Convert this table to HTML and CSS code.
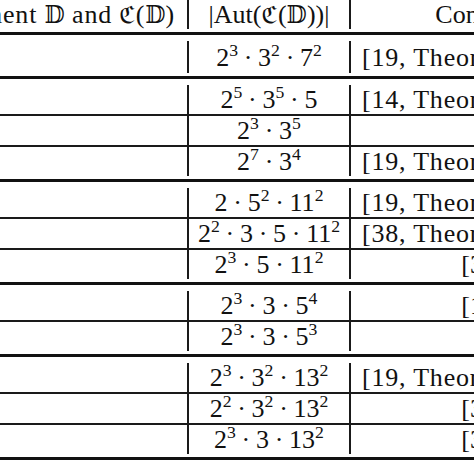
FILE: index.html
```html
<!DOCTYPE html>
<html>
<head>
<meta charset="utf-8">
<link rel="stylesheet" href="styles.css">
</head>
<body>
<div class="viewport">
  <div class="tbl">
    <div class="row head">
      <div class="c c1"><span class="t wide">Element <span class="bb">𝔻</span> and <span class="fk">ℭ</span>(<span class="bb">𝔻</span>)</span></div>
      <div class="c c2"><span class="t">|Aut(<span class="fk">ℭ</span>(<span class="bb">𝔻</span>))|</span></div>
      <div class="c c3"><span class="t">Construction</span></div>
    </div>
    <div class="dbl"></div>

    <div class="group g1">
      <div class="row">
        <div class="c c1"></div>
        <div class="c c2"><span class="t">2<sup>3</sup><span class="op">·</span>3<sup>2</sup><span class="op">·</span>7<sup>2</sup></span></div>
        <div class="c c3 l"><span class="t wide">[19, Theorem 3.14, Case 2]</span></div>
      </div>
    </div>
    <div class="dbl"></div>

    <div class="group">
      <div class="row">
        <div class="c c1"></div>
        <div class="c c2"><span class="t">2<sup>5</sup><span class="op">·</span>3<sup>5</sup><span class="op">·</span>5</span></div>
        <div class="c c3 l"><span class="t wide">[14, Theorem 4.12, Case 1]</span></div>
      </div>
      <div class="row">
        <div class="c c1"></div>
        <div class="c c2"><span class="t">2<sup>3</sup><span class="op">·</span>3<sup>5</sup></span></div>
        <div class="c c3"></div>
      </div>
      <div class="row">
        <div class="c c1"></div>
        <div class="c c2"><span class="t">2<sup>7</sup><span class="op">·</span>3<sup>4</sup></span></div>
        <div class="c c3 l"><span class="t wide">[19, Theorem 3.15, Case 3]</span></div>
      </div>
    </div>
    <div class="dbl"></div>

    <div class="group">
      <div class="row">
        <div class="c c1"></div>
        <div class="c c2"><span class="t">2<span class="op">·</span>5<sup>2</sup><span class="op">·</span>11<sup>2</sup></span></div>
        <div class="c c3 l"><span class="t wide">[19, Theorem 3.16, Case 1]</span></div>
      </div>
      <div class="row">
        <div class="c c1"></div>
        <div class="c c2"><span class="t">2<sup>2</sup><span class="op">·</span>3<span class="op">·</span>5<span class="op">·</span>11<sup>2</sup></span></div>
        <div class="c c3 l"><span class="t wide">[38, Theorem 5.11, Case 2]</span></div>
      </div>
      <div class="row">
        <div class="c c1"></div>
        <div class="c c2"><span class="t">2<sup>3</sup><span class="op">·</span>5<span class="op">·</span>11<sup>2</sup></span></div>
        <div class="c c3"><span class="t">[35, 36]</span></div>
      </div>
    </div>
    <div class="dbl"></div>

    <div class="group">
      <div class="row">
        <div class="c c1"></div>
        <div class="c c2"><span class="t">2<sup>3</sup><span class="op">·</span>3<span class="op">·</span>5<sup>4</sup></span></div>
        <div class="c c3"><span class="t">[16, 17]</span></div>
      </div>
      <div class="row">
        <div class="c c1"></div>
        <div class="c c2"><span class="t">2<sup>3</sup><span class="op">·</span>3<span class="op">·</span>5<sup>3</sup></span></div>
        <div class="c c3"></div>
      </div>
    </div>
    <div class="dbl"></div>

    <div class="group">
      <div class="row">
        <div class="c c1"></div>
        <div class="c c2"><span class="t">2<sup>3</sup><span class="op">·</span>3<sup>2</sup><span class="op">·</span>13<sup>2</sup></span></div>
        <div class="c c3 l"><span class="t wide">[19, Theorem 3.17, Case 1]</span></div>
      </div>
      <div class="row">
        <div class="c c1"></div>
        <div class="c c2"><span class="t">2<sup>2</sup><span class="op">·</span>3<sup>2</sup><span class="op">·</span>13<sup>2</sup></span></div>
        <div class="c c3"><span class="t">[35, 36]</span></div>
      </div>
      <div class="row">
        <div class="c c1"></div>
        <div class="c c2"><span class="t">2<sup>3</sup><span class="op">·</span>3<span class="op">·</span>13<sup>2</sup></span></div>
        <div class="c c3"><span class="t">[36, 37]</span></div>
      </div>
    </div>
    <div class="dbl"></div>
  </div>
</div>
</body>
</html>
```
FILE: styles.css
```css
html, body {
  margin: 0;
  padding: 0;
  background: #fff;
}

.viewport {
  width: 474px;
  height: 474px;
  overflow: hidden;
}

.tbl {
  width: 761px;
  margin-left: -113px;
  font-family: "Liberation Serif", "Times New Roman", Tinos, "DejaVu Serif", serif;
  font-size: 26px;
  color: #111;
}

.row {
  display: grid;
  grid-template-columns: 300px 162px 299px;
}

.c {
  box-sizing: border-box;
  display: flex;
  align-items: center;
  justify-content: center;
  white-space: nowrap;
  height: 29px;
}

.c3 {
  padding-left: 6px;
}

.c3.l {
  justify-content: flex-start;
  padding-left: 11px;
}

.t {
  display: block;
  line-height: 29px;
  white-space: nowrap;
}

.wide {
  letter-spacing: 0.8px;
}

.c2, .c3 {
  border-left: 2px solid #1a1a1a;
}

.head {
  padding-bottom: 3px;
}

.head .c1 {
  justify-content: flex-end;
  padding-right: 12px;
}

.bb, .fk {
  font-family: "DejaVu Serif", "DejaVu Sans", serif;
  font-size: 0.9em;
  letter-spacing: 0;
}

.dbl {
  height: 3px;
  background: #111;
}

.group {
  padding: 6px 0 3px;
}

.group .row + .row {
  border-top: 2px solid #1a1a1a;
}

.g1 .c {
  height: 32px;
}

sup {
  font-size: 0.68em;
  vertical-align: 0.55em;
  line-height: 0;
}

.op {
  margin: 0 0.22em;
}
```
